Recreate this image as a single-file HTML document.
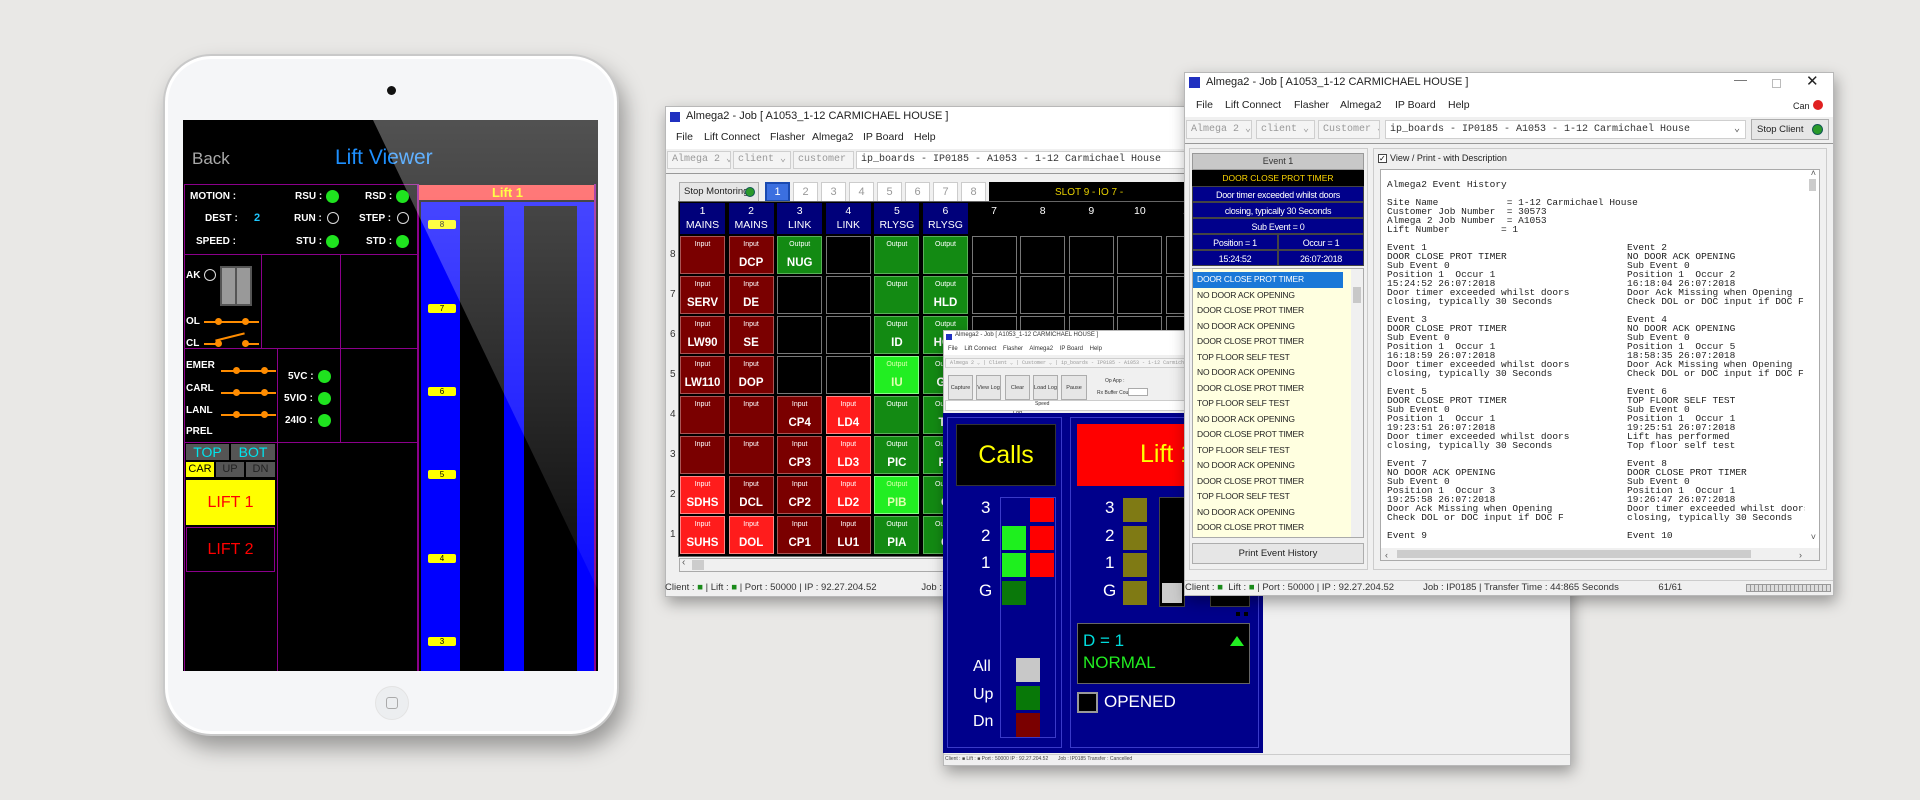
<!DOCTYPE html>
<html><head><meta charset="utf-8">
<style>
*{margin:0;padding:0;box-sizing:border-box}
body{width:1920px;height:800px;background:#e9e8e6;position:relative;overflow:hidden;font-family:"Liberation Sans",sans-serif}
.a{position:absolute}
.t{position:absolute;white-space:nowrap}
.win{position:absolute;background:#f0f0f0;border:1px solid #b8b8b8;box-shadow:2px 6px 14px rgba(0,0,0,.35)}
.cb{position:absolute;background:#f4f4f4;border:1px solid #cfcfcf;font-family:"Liberation Mono",monospace;color:#999;font-size:10px;padding-left:4px;line-height:16px;white-space:nowrap;overflow:hidden}
.grid{position:absolute;left:680px;top:203px;display:grid;grid-template-columns:repeat(11,45px);column-gap:3.6px;grid-template-rows:31px repeat(8,38px);row-gap:2px}
.grid div{color:#fff;text-align:center;font-size:7px;line-height:10px;padding-top:3px;overflow:hidden;white-space:nowrap}
.grid div b{display:block;font-size:11.5px;line-height:14px;margin-top:6px}
.h{background:#00007a;font-size:10.5px!important;line-height:14px!important;padding-top:1px!important}
.hk{background:#000;font-size:10.5px!important;line-height:14px!important;padding-top:1px!important}
.d{background:#7a0000;border:1px solid #aa5555}
.r{background:#ff1c1c;border:1px solid #ff8888}
.g{background:#138a13;border:1px solid #5ab05a}
.G{background:#22ee22;border:1px solid #88ff88;color:#dfffb0!important}
.k{background:#000;border:1px solid #777}
.sw{position:absolute;height:2px;background:#ff8c00}
.sd{position:absolute;width:7px;height:7px;border-radius:50%;background:#ff8c00}
.gd{position:absolute;width:13px;height:13px;border-radius:50%;background:#1fe31f}
.od{position:absolute;width:12px;height:12px;border-radius:50%;border:1px solid #ddd}
.tw{position:absolute;color:#fff;font-weight:bold;font-size:10px;white-space:nowrap}
.pl{position:absolute;border:1px solid #8b008b}
.fl{position:absolute;left:245px;width:28px;height:9px;background:#ffff00;border-radius:2px;font-size:8px;line-height:9px;text-align:center;color:#000}
.li{height:15.5px;line-height:15.5px;font-size:8.5px;color:#222;padding-left:4px;letter-spacing:-.2px;white-space:nowrap}
.nv{position:absolute;background:#00008b;color:#fff;font-size:9px;text-align:center;line-height:16px;border:1px solid #444;white-space:nowrap;letter-spacing:-.3px}
pre{font-family:"Liberation Mono",monospace;font-size:9.5px;line-height:9px;color:#222}
.bt{position:absolute;background:#e6e6e6;border:1px solid #adadad;font-size:5.5px;text-align:center;line-height:25px;color:#333}
</style></head><body>

<!-- TABLET -->
<div class="a" style="left:163px;top:54px;width:456px;height:682px;border-radius:48px;background:#f5f6f8;border:2px solid #c9c9c9;box-shadow:6px 12px 22px rgba(0,0,0,.35), inset 0 0 0 3px #fff"></div>
<div class="a" style="left:387px;top:86px;width:9px;height:9px;border-radius:50%;background:#111"></div>
<div class="a" style="left:375px;top:686px;width:34px;height:34px;border-radius:50%;background:#eceef0;border:1px solid #e3e3e3"></div>
<div class="a" style="left:386px;top:697px;width:12px;height:12px;border-radius:3px;border:1px solid #aaa"></div>

<div class="a" style="left:183px;top:120px;width:415px;height:551px;background:#000;overflow:hidden">
  <div class="t" style="left:9px;top:29px;font-size:17px;color:#aaa">Back</div>
  <div class="t" style="left:152px;top:26px;font-size:21px;color:#1e90ff">Lift Viewer</div>
  <div class="pl" style="left:1px;top:64px;width:234px;height:71px"></div>
  <div class="tw" style="left:7px;top:71px">MOTION :</div>
  <div class="tw" style="left:22px;top:93px">DEST :</div>
  <div class="t" style="left:71px;top:92px;color:#1ec8ff;font-size:11px;font-weight:bold">2</div>
  <div class="tw" style="left:13px;top:116px">SPEED :</div>
  <div class="tw" style="left:112px;top:71px">RSU :</div><div class="gd" style="left:143px;top:70px"></div>
  <div class="tw" style="left:111px;top:93px">RUN :</div><div class="od" style="left:144px;top:92px"></div>
  <div class="tw" style="left:113px;top:116px">STU :</div><div class="gd" style="left:143px;top:115px"></div>
  <div class="tw" style="left:182px;top:71px">RSD :</div><div class="gd" style="left:213px;top:70px"></div>
  <div class="tw" style="left:176px;top:93px">STEP :</div><div class="od" style="left:214px;top:92px"></div>
  <div class="tw" style="left:183px;top:116px">STD :</div><div class="gd" style="left:213px;top:115px"></div>
  <div class="pl" style="left:1px;top:134px;width:78px;height:95px"></div>
  <div class="pl" style="left:78px;top:134px;width:80px;height:95px"></div>
  <div class="pl" style="left:157px;top:134px;width:78px;height:95px"></div>
  <div class="tw" style="left:3px;top:150px">AK</div><div class="od" style="left:21px;top:149px"></div>
  <div class="a" style="left:37px;top:146px;width:32px;height:40px;background:#999;border:2px solid #555"></div>
  <div class="a" style="left:52px;top:148px;width:2px;height:36px;background:#555"></div>
  <div class="tw" style="left:3px;top:196px">OL</div>
  <div class="sw" style="left:21px;top:201px;width:55px"></div><div class="sd" style="left:32px;top:198px"></div><div class="sd" style="left:59px;top:198px"></div>
  <div class="tw" style="left:3px;top:218px">CL</div>
  <div class="sw" style="left:21px;top:223px;width:12px"></div><div class="sw" style="left:64px;top:223px;width:12px"></div>
  <div class="sw" style="left:32px;top:216px;width:30px;transform:rotate(-14deg)"></div><div class="sd" style="left:32px;top:220px"></div><div class="sd" style="left:59px;top:220px"></div>
  <div class="pl" style="left:1px;top:228px;width:94px;height:95px"></div>
  <div class="pl" style="left:94px;top:228px;width:64px;height:95px"></div>
  <div class="pl" style="left:157px;top:228px;width:78px;height:95px"></div>
  <div class="tw" style="left:3px;top:240px">EMER</div><div class="sw" style="left:38px;top:250px;width:55px"></div><div class="sd" style="left:50px;top:247px"></div><div class="sd" style="left:78px;top:247px"></div>
  <div class="tw" style="left:3px;top:263px">CARL</div><div class="sw" style="left:38px;top:272px;width:55px"></div><div class="sd" style="left:50px;top:269px"></div><div class="sd" style="left:78px;top:269px"></div>
  <div class="tw" style="left:3px;top:285px">LANL</div><div class="sw" style="left:38px;top:294px;width:55px"></div><div class="sd" style="left:50px;top:291px"></div><div class="sd" style="left:78px;top:291px"></div>
  <div class="tw" style="left:3px;top:306px">PREL</div>
  <div class="tw" style="left:105px;top:251px">5VC :</div><div class="gd" style="left:135px;top:250px"></div>
  <div class="tw" style="left:101px;top:273px">5VIO :</div><div class="gd" style="left:135px;top:272px"></div>
  <div class="tw" style="left:102px;top:295px">24IO :</div><div class="gd" style="left:135px;top:294px"></div>
  <div class="pl" style="left:1px;top:322px;width:94px;height:240px"></div>
  <div class="pl" style="left:94px;top:322px;width:141px;height:240px"></div>
  <div class="a" style="left:3px;top:324px;width:43px;height:16px;background:#555;color:#00e5ee;font-size:14px;line-height:16px;text-align:center">TOP</div>
  <div class="a" style="left:48px;top:324px;width:44px;height:16px;background:#555;color:#00e5ee;font-size:14px;line-height:16px;text-align:center">BOT</div>
  <div class="a" style="left:3px;top:342px;width:28px;height:15px;background:#ffff00;color:#000;font-size:11px;line-height:15px;text-align:center">CAR</div>
  <div class="a" style="left:33px;top:342px;width:28px;height:15px;background:#555;color:#222;font-size:11px;line-height:15px;text-align:center">UP</div>
  <div class="a" style="left:63px;top:342px;width:29px;height:15px;background:#555;color:#222;font-size:11px;line-height:15px;text-align:center">DN</div>
  <div class="a" style="left:3px;top:360px;width:89px;height:45px;background:#ffff00;color:#f00;font-size:16px;line-height:45px;text-align:center">LIFT 1</div>
  <div class="a" style="left:3px;top:407px;width:89px;height:45px;border:1px solid #8b008b;color:#f00;font-size:16px;line-height:43px;text-align:center">LIFT 2</div>
  <div class="a" style="left:236px;top:65px;width:177px;height:15px;background:#ff4444;color:#ffff00;font-size:13px;font-weight:bold;line-height:15px;text-align:center">Lift 1</div>
  <div class="a" style="left:234px;top:64px;width:2px;height:490px;background:#8b008b"></div>
  <div class="a" style="left:238px;top:82px;width:173px;height:480px;background:#0000ff"></div>
  <div class="a" style="left:277px;top:86px;width:44px;height:470px;background:#000"></div>
  <div class="a" style="left:341px;top:86px;width:53px;height:470px;background:#000"></div>
  <div class="a" style="left:411px;top:64px;width:2px;height:490px;background:#8b008b"></div>
  <div class="fl" style="top:100px">8</div><div class="fl" style="top:184px">7</div><div class="fl" style="top:267px">6</div><div class="fl" style="top:350px">5</div><div class="fl" style="top:434px">4</div><div class="fl" style="top:517px">3</div>
  <svg class="a" style="left:0;top:0" width="415" height="551"><defs><linearGradient id="gl" x1="0" y1="0" x2="0" y2="1"><stop offset="0" stop-color="#fff" stop-opacity=".32"/><stop offset="1" stop-color="#fff" stop-opacity=".05"/></linearGradient></defs><polygon points="190,0 415,0 415,470" fill="url(#gl)"/></svg>
</div>

<!-- WINDOW 1 -->
<div class="win" style="left:665px;top:106px;width:540px;height:491px"></div>
<div class="a" style="left:666px;top:107px;width:538px;height:42px;background:#fff"></div>
<div class="a" style="left:670px;top:112px;width:10px;height:10px;background:#2030c0"></div>
<div class="t" style="left:686px;top:110px;font-size:11px;color:#222">Almega2 - Job [ A1053_1-12 CARMICHAEL HOUSE ]</div>
<div class="t" style="left:676px;top:131px;font-size:10.5px;color:#222">File</div>
<div class="t" style="left:704px;top:131px;font-size:10.5px;color:#222">Lift Connect</div>
<div class="t" style="left:770px;top:131px;font-size:10.5px;color:#222">Flasher</div>
<div class="t" style="left:812px;top:131px;font-size:10.5px;color:#222">Almega2</div>
<div class="t" style="left:863px;top:131px;font-size:10.5px;color:#222">IP Board</div>
<div class="t" style="left:914px;top:131px;font-size:10.5px;color:#222">Help</div>
<div class="cb" style="left:667px;top:151px;width:64px;height:18px">Almega 2 ⌄</div>
<div class="cb" style="left:733px;top:151px;width:58px;height:18px">client ⌄</div>
<div class="cb" style="left:793px;top:151px;width:61px;height:18px">customer ⌄</div>
<div class="cb" style="left:856px;top:151px;width:340px;height:18px;background:#fff;color:#333">ip_boards - IP0185 - A1053 - 1-12 Carmichael House</div>
<div class="a" style="left:666px;top:173px;width:538px;height:1px;background:#999"></div>
<div class="a" style="left:679px;top:182px;width:80px;height:20px;background:#e6e6e6;border:1px solid #adadad;font-size:9.5px;line-height:18px;padding-left:4px;color:#222">Stop Montoring</div>
<div class="a" style="left:745px;top:187px;width:10px;height:10px;border-radius:50%;background:#2a9a2a;border:1px solid #155"></div>
<div class="a" style="left:765px;top:182px;width:25px;height:20px;background:#3b6fe0;border:2px solid #1a4ab0;color:#fff;font-size:11px;text-align:center;line-height:16px">1</div>
<div class="a" style="left:793px;top:182px;width:25px;height:20px;background:#fff;border:1px solid #ccc;color:#999;font-size:11px;text-align:center;line-height:18px">2</div>
<div class="a" style="left:821px;top:182px;width:25px;height:20px;background:#fff;border:1px solid #ccc;color:#999;font-size:11px;text-align:center;line-height:18px">3</div>
<div class="a" style="left:849px;top:182px;width:25px;height:20px;background:#fff;border:1px solid #ccc;color:#999;font-size:11px;text-align:center;line-height:18px">4</div>
<div class="a" style="left:877px;top:182px;width:25px;height:20px;background:#fff;border:1px solid #ccc;color:#999;font-size:11px;text-align:center;line-height:18px">5</div>
<div class="a" style="left:905px;top:182px;width:25px;height:20px;background:#fff;border:1px solid #ccc;color:#999;font-size:11px;text-align:center;line-height:18px">6</div>
<div class="a" style="left:933px;top:182px;width:25px;height:20px;background:#fff;border:1px solid #ccc;color:#999;font-size:11px;text-align:center;line-height:18px">7</div>
<div class="a" style="left:961px;top:182px;width:25px;height:20px;background:#fff;border:1px solid #ccc;color:#999;font-size:11px;text-align:center;line-height:18px">8</div>
<div class="a" style="left:989px;top:182px;width:216px;height:21px;background:#000;color:#e8d000;font-size:10px;line-height:21px;padding-left:66px">SLOT 9 - IO 7 -</div>
<div class="a" style="left:678px;top:201px;width:527px;height:356px;background:#000;border:1px solid #666"></div>
<div class="t" style="left:670px;top:249px;font-size:10px;color:#333">8</div>
<div class="t" style="left:670px;top:289px;font-size:10px;color:#333">7</div>
<div class="t" style="left:670px;top:329px;font-size:10px;color:#333">6</div>
<div class="t" style="left:670px;top:369px;font-size:10px;color:#333">5</div>
<div class="t" style="left:670px;top:409px;font-size:10px;color:#333">4</div>
<div class="t" style="left:670px;top:449px;font-size:10px;color:#333">3</div>
<div class="t" style="left:670px;top:489px;font-size:10px;color:#333">2</div>
<div class="t" style="left:670px;top:529px;font-size:10px;color:#333">1</div>
<div class="grid">
<div class="h">1<br>MAINS</div><div class="h">2<br>MAINS</div><div class="h">3<br>LINK</div><div class="h">4<br>LINK</div><div class="h">5<br>RLYSG</div><div class="h">6<br>RLYSG</div><div class="hk">7</div><div class="hk">8</div><div class="hk">9</div><div class="hk">10</div><div class="hk">11</div>
<div class="d">Input</div><div class="d">Input<b>DCP</b></div><div class="g">Output<b>NUG</b></div><div class="k"></div><div class="g">Output</div><div class="g">Output</div><div class="k"></div><div class="k"></div><div class="k"></div><div class="k"></div><div class="k"></div>
<div class="d">Input<b>SERV</b></div><div class="d">Input<b>DE</b></div><div class="k"></div><div class="k"></div><div class="g">Output</div><div class="g">Output<b>HLD</b></div><div class="k"></div><div class="k"></div><div class="k"></div><div class="k"></div><div class="k"></div>
<div class="d">Input<b>LW90</b></div><div class="d">Input<b>SE</b></div><div class="k"></div><div class="k"></div><div class="g">Output<b>ID</b></div><div class="g">Output<b>HCL</b></div><div class="k"></div><div class="k"></div><div class="k"></div><div class="k"></div><div class="k"></div>
<div class="d">Input<b>LW110</b></div><div class="d">Input<b>DOP</b></div><div class="k"></div><div class="k"></div><div class="G">Output<b>IU</b></div><div class="g">Output<b>GO</b></div><div class="k"></div><div class="k"></div><div class="k"></div><div class="k"></div><div class="k"></div>
<div class="d">Input</div><div class="d">Input</div><div class="d">Input<b>CP4</b></div><div class="r">Input<b>LD4</b></div><div class="g">Output</div><div class="g">Output<b>TL</b></div><div class="k"></div><div class="k"></div><div class="k"></div><div class="k"></div><div class="k"></div>
<div class="d">Input</div><div class="d">Input</div><div class="d">Input<b>CP3</b></div><div class="r">Input<b>LD3</b></div><div class="g">Output<b>PIC</b></div><div class="g">Output<b>FL</b></div><div class="k"></div><div class="k"></div><div class="k"></div><div class="k"></div><div class="k"></div>
<div class="r">Input<b>SDHS</b></div><div class="d">Input<b>DCL</b></div><div class="d">Input<b>CP2</b></div><div class="r">Input<b>LD2</b></div><div class="G">Output<b>PIB</b></div><div class="g">Output<b>G</b></div><div class="k"></div><div class="k"></div><div class="k"></div><div class="k"></div><div class="k"></div>
<div class="r">Input<b>SUHS</b></div><div class="r">Input<b>DOL</b></div><div class="d">Input<b>CP1</b></div><div class="d">Input<b>LU1</b></div><div class="g">Output<b>PIA</b></div><div class="g">Output<b>G</b></div><div class="k"></div><div class="k"></div><div class="k"></div><div class="k"></div><div class="k"></div>
</div>
<div class="a" style="left:679px;top:558px;width:520px;height:14px;background:#f0f0f0;border:1px solid #aaa"></div>
<div class="a" style="left:692px;top:560px;width:12px;height:10px;background:#ccc"></div>
<div class="t" style="left:682px;top:557px;font-size:10px;color:#555">‹</div>
<div class="t" style="left:665px;top:582px;font-size:9.5px;color:#333">Client : <span style="color:#1a8a1a">■</span> | Lift : <span style="color:#1a8a1a">■</span> | Port : 50000 | IP : 92.27.204.52 &nbsp; &nbsp; &nbsp; &nbsp; &nbsp; &nbsp; &nbsp; &nbsp; Job : IP0185</div>

<!-- WINDOW 2 -->
<div class="win" style="left:943px;top:330px;width:628px;height:436px"></div>
<div class="a" style="left:944px;top:331px;width:626px;height:24px;background:#fff"></div>
<div class="a" style="left:946px;top:334px;width:6px;height:6px;background:#2030c0"></div>
<div class="t" style="left:955px;top:332px;font-size:6px;color:#333">Almega2 - Job [ A1053_1-12 CARMICHAEL HOUSE ]</div>
<div class="t" style="left:948px;top:346px;font-size:6px;color:#333">File &nbsp;&nbsp; Lift Connect &nbsp;&nbsp; Flasher &nbsp;&nbsp; Almega2 &nbsp;&nbsp; IP Board &nbsp;&nbsp; Help</div>
<div class="cb" style="left:945px;top:358px;width:240px;height:10px;font-size:5px;line-height:8px">Almega 2 ⌄ | Client ⌄ | Customer ⌄ | ip_boards - IP0185 - A1053 - 1-12 Carmichael</div>
<div class="bt" style="left:948px;top:375px;width:25px;height:25px">Capture</div>
<div class="bt" style="left:976px;top:375px;width:25px;height:25px">View Log</div>
<div class="bt" style="left:1005px;top:375px;width:25px;height:25px">Clear Log</div>
<div class="bt" style="left:1033px;top:375px;width:25px;height:25px">Load Log</div>
<div class="bt" style="left:1061px;top:375px;width:26px;height:25px">Pause</div>
<div class="t" style="left:1105px;top:378px;font-size:5px;color:#333">Op App :</div>
<div class="t" style="left:1097px;top:390px;font-size:5px;color:#333">Rx Buffer Count :</div>
<div class="a" style="left:1128px;top:388px;width:20px;height:8px;background:#fff;border:1px solid #aaa"></div>
<div class="a" style="left:945px;top:400px;width:620px;height:11px;background:#fff;border:1px solid #ccc"></div>
<div class="t" style="left:1035px;top:401px;font-size:5px;color:#333">Speed</div>
<div class="a" style="left:943px;top:413px;width:320px;height:340px;background:#00008b"></div>
<div class="a" style="left:947px;top:417px;width:115px;height:331px;border:1px solid #3a3ac8"></div>
<div class="a" style="left:1070px;top:417px;width:189px;height:331px;border:1px solid #3a3ac8"></div>
<div class="a" style="left:956px;top:424px;width:100px;height:62px;background:#000;border:1px solid #333;color:#ffff00;font-size:25px;line-height:60px;text-align:center">Calls</div>
<div class="a" style="left:1000px;top:497px;width:56px;height:241px;border:1px solid #3a3ac8"></div>
<div class="t" style="left:981px;top:498px;font-size:17px;color:#fff">3</div>
<div class="t" style="left:981px;top:526px;font-size:17px;color:#fff">2</div>
<div class="t" style="left:981px;top:553px;font-size:17px;color:#fff">1</div>
<div class="t" style="left:979px;top:581px;font-size:17px;color:#fff">G</div>
<div class="a" style="left:1030px;top:498px;width:24px;height:24px;background:#f00"></div>
<div class="a" style="left:1002px;top:526px;width:24px;height:24px;background:#1ef01e"></div>
<div class="a" style="left:1030px;top:526px;width:24px;height:24px;background:#f00"></div>
<div class="a" style="left:1002px;top:553px;width:24px;height:24px;background:#1ef01e"></div>
<div class="a" style="left:1030px;top:553px;width:24px;height:24px;background:#f00"></div>
<div class="a" style="left:1002px;top:581px;width:24px;height:24px;background:#0a780a"></div>
<div class="t" style="left:973px;top:658px;font-size:16px;color:#fff">All</div>
<div class="t" style="left:973px;top:686px;font-size:16px;color:#fff">Up</div>
<div class="t" style="left:973px;top:713px;font-size:16px;color:#fff">Dn</div>
<div class="a" style="left:1016px;top:658px;width:24px;height:24px;background:#c8c8c8"></div>
<div class="a" style="left:1016px;top:686px;width:24px;height:24px;background:#087808"></div>
<div class="a" style="left:1016px;top:713px;width:24px;height:24px;background:#7a0000"></div>
<div class="a" style="left:1077px;top:424px;width:180px;height:62px;background:#f00;color:#ffff00;font-size:25px;line-height:60px;padding-left:63px">Lift 1</div>
<div class="t" style="left:1105px;top:498px;font-size:17px;color:#fff">3</div>
<div class="t" style="left:1105px;top:526px;font-size:17px;color:#fff">2</div>
<div class="t" style="left:1105px;top:553px;font-size:17px;color:#fff">1</div>
<div class="t" style="left:1103px;top:581px;font-size:17px;color:#fff">G</div>
<div class="a" style="left:1123px;top:498px;width:24px;height:24px;background:#7f7a14"></div>
<div class="a" style="left:1123px;top:526px;width:24px;height:24px;background:#7f7a14"></div>
<div class="a" style="left:1123px;top:553px;width:24px;height:24px;background:#7f7a14"></div>
<div class="a" style="left:1123px;top:581px;width:24px;height:24px;background:#7f7a14"></div>
<div class="a" style="left:1159px;top:497px;width:26px;height:110px;background:#000;border:1px solid #444"></div>
<div class="a" style="left:1162px;top:583px;width:20px;height:20px;background:#ccc"></div>
<div class="a" style="left:1210px;top:589px;width:40px;height:18px;background:#000;border:1px solid #444"></div>
<div class="a" style="left:1236px;top:612px;width:4px;height:4px;background:#000"></div><div class="a" style="left:1244px;top:612px;width:4px;height:4px;background:#000"></div>
<div class="a" style="left:1077px;top:623px;width:173px;height:61px;background:#000;border:1px solid #666"></div>
<div class="t" style="left:1083px;top:631px;font-size:17px;color:#00dddd">D = 1</div>
<div class="t" style="left:1083px;top:653px;font-size:17px;color:#22ee22">NORMAL</div>
<div class="a" style="left:1230px;top:636px;width:0;height:0;border-left:7px solid transparent;border-right:7px solid transparent;border-bottom:10px solid #22ee22"></div>
<div class="a" style="left:1077px;top:692px;width:21px;height:21px;background:#000;border:2px solid #999"></div>
<div class="t" style="left:1104px;top:692px;font-size:17px;color:#fff">OPENED</div>
<div class="a" style="left:944px;top:754px;width:626px;height:1px;background:#ccc"></div>
<div class="t" style="left:945px;top:756px;font-size:5px;color:#444">Client : ■ Lift : ■ Port : 50000 IP : 92.27.204.52 &nbsp; &nbsp; &nbsp; Job : IP0185 Transfer : Cancelled</div>

<!-- WINDOW 3 -->
<div class="win" style="left:1184px;top:72px;width:650px;height:524px"></div>
<div class="a" style="left:1185px;top:73px;width:648px;height:44px;background:#fff"></div>
<div class="a" style="left:1189px;top:77px;width:11px;height:11px;background:#2030c0"></div>
<div class="t" style="left:1206px;top:76px;font-size:11px;color:#222">Almega2 - Job [ A1053_1-12 CARMICHAEL HOUSE ]</div>
<div class="t" style="left:1734px;top:72px;font-size:13px;color:#666">—</div>
<div class="a" style="left:1772px;top:79px;width:9px;height:9px;border:1px solid #bbb"></div>
<div class="t" style="left:1806px;top:72px;font-size:15px;color:#222">✕</div>
<div class="t" style="left:1196px;top:99px;font-size:10.5px;color:#222">File</div>
<div class="t" style="left:1225px;top:99px;font-size:10.5px;color:#222">Lift Connect</div>
<div class="t" style="left:1294px;top:99px;font-size:10.5px;color:#222">Flasher</div>
<div class="t" style="left:1340px;top:99px;font-size:10.5px;color:#222">Almega2</div>
<div class="t" style="left:1395px;top:99px;font-size:10.5px;color:#222">IP Board</div>
<div class="t" style="left:1448px;top:99px;font-size:10.5px;color:#222">Help</div>
<div class="t" style="left:1793px;top:101px;font-size:9px;color:#222">Can</div>
<div class="a" style="left:1813px;top:100px;width:10px;height:10px;border-radius:50%;background:#e02020"></div>
<div class="cb" style="left:1186px;top:120px;width:66px;height:19px;line-height:17px">Almega 2 ⌄</div>
<div class="cb" style="left:1256px;top:120px;width:59px;height:19px;line-height:17px">client ⌄</div>
<div class="cb" style="left:1318px;top:120px;width:62px;height:19px;line-height:17px">Customer ⌄</div>
<div class="cb" style="left:1385px;top:120px;width:361px;height:19px;line-height:17px;background:#fff;color:#333">ip_boards - IP0185 - A1053 - 1-12 Carmichael House<span style="position:absolute;right:5px;color:#555">⌄</span></div>
<div class="a" style="left:1751px;top:119px;width:78px;height:21px;background:#e6e6e6;border:1px solid #adadad;font-size:9.5px;line-height:19px;padding-left:5px;color:#222">Stop Client</div>
<div class="a" style="left:1812px;top:124px;width:11px;height:11px;border-radius:50%;background:#2a9a2a;border:1px solid #155"></div>
<div class="a" style="left:1185px;top:143px;width:648px;height:1px;background:#999"></div>
<div class="a" style="left:1189px;top:148px;width:179px;height:422px;border:1px solid #ccc"></div>
<div class="a" style="left:1192px;top:153px;width:172px;height:17px;background:#c8c8c8;border:1px solid #999;font-size:9px;line-height:15px;text-align:center;color:#333">Event 1</div>
<div class="a" style="left:1192px;top:170px;width:172px;height:16px;background:#000;color:#ffd800;font-size:8.5px;line-height:16px;text-align:center">DOOR CLOSE PROT TIMER</div>
<div class="nv" style="left:1192px;top:186px;width:172px;height:16px">Door timer exceeded whilst doors</div>
<div class="nv" style="left:1192px;top:202px;width:172px;height:16px">closing, typically 30 Seconds</div>
<div class="nv" style="left:1192px;top:218px;width:172px;height:16px">Sub Event = 0</div>
<div class="nv" style="left:1192px;top:234px;width:86px;height:16px">Position = 1</div>
<div class="nv" style="left:1278px;top:234px;width:86px;height:16px">Occur = 1</div>
<div class="nv" style="left:1192px;top:250px;width:86px;height:16px">15:24:52</div>
<div class="nv" style="left:1278px;top:250px;width:86px;height:16px">26:07:2018</div>
<div class="a" style="left:1192px;top:268px;width:172px;height:270px;background:#ffffe0;border:1px solid #aaa;overflow:hidden;padding-top:3px">
  <div class="li" style="background:#1a78d8;color:#fff;width:150px">DOOR CLOSE PROT TIMER</div>
  <div class="li">NO DOOR ACK OPENING</div><div class="li">DOOR CLOSE PROT TIMER</div><div class="li">NO DOOR ACK OPENING</div><div class="li">DOOR CLOSE PROT TIMER</div><div class="li">TOP FLOOR SELF TEST</div><div class="li">NO DOOR ACK OPENING</div><div class="li">DOOR CLOSE PROT TIMER</div><div class="li">TOP FLOOR SELF TEST</div><div class="li">NO DOOR ACK OPENING</div><div class="li">DOOR CLOSE PROT TIMER</div><div class="li">TOP FLOOR SELF TEST</div><div class="li">NO DOOR ACK OPENING</div><div class="li">DOOR CLOSE PROT TIMER</div><div class="li">TOP FLOOR SELF TEST</div><div class="li">NO DOOR ACK OPENING</div><div class="li">DOOR CLOSE PROT TIMER</div>
  <div class="a" style="right:0;top:0;width:12px;height:268px;background:#f0f0f0"></div>
  <div class="a" style="right:2px;top:18px;width:8px;height:16px;background:#c8c8c8"></div>
</div>
<div class="a" style="left:1192px;top:543px;width:172px;height:21px;background:#e6e6e6;border:1px solid #adadad;font-size:9.5px;line-height:19px;text-align:center;color:#222">Print Event History</div>
<div class="a" style="left:1373px;top:148px;width:454px;height:422px;border:1px solid #ccc"></div>
<div class="a" style="left:1378px;top:154px;width:9px;height:9px;border:1px solid #444;background:#fff;font-size:8px;line-height:7px">✓</div>
<div class="t" style="left:1390px;top:153px;font-size:9px;color:#222">View / Print - with Description</div>
<div class="a" style="left:1380px;top:169px;width:440px;height:392px;background:#fff;border:1px solid #aaa;overflow:hidden">
<pre class="a" style="left:6px;top:10px">Almega2 Event History

Site Name            = 1-12 Carmichael House
Customer Job Number  = 30573
Almega 2 Job Number  = A1053
Lift Number         = 1

Event 1
DOOR CLOSE PROT TIMER
Sub Event 0
Position 1  Occur 1
15:24:52 26:07:2018
Door timer exceeded whilst doors
closing, typically 30 Seconds

Event 3
DOOR CLOSE PROT TIMER
Sub Event 0
Position 1  Occur 1
16:18:59 26:07:2018
Door timer exceeded whilst doors
closing, typically 30 Seconds

Event 5
DOOR CLOSE PROT TIMER
Sub Event 0
Position 1  Occur 1
19:23:51 26:07:2018
Door timer exceeded whilst doors
closing, typically 30 Seconds

Event 7
NO DOOR ACK OPENING
Sub Event 0
Position 1  Occur 3
19:25:58 26:07:2018
Door Ack Missing when Opening
Check DOL or DOC input if DOC F

Event 9</pre>
<pre class="a" style="left:246px;top:73px">Event 2
NO DOOR ACK OPENING
Sub Event 0
Position 1  Occur 2
16:18:04 26:07:2018
Door Ack Missing when Opening
Check DOL or DOC input if DOC F

Event 4
NO DOOR ACK OPENING
Sub Event 0
Position 1  Occur 5
18:58:35 26:07:2018
Door Ack Missing when Opening
Check DOL or DOC input if DOC F

Event 6
TOP FLOOR SELF TEST
Sub Event 0
Position 1  Occur 1
19:25:51 26:07:2018
Lift has performed
Top floor self test

Event 8
DOOR CLOSE PROT TIMER
Sub Event 0
Position 1  Occur 1
19:26:47 26:07:2018
Door timer exceeded whilst doors
closing, typically 30 Seconds

Event 10</pre>
  <div class="a" style="right:0;top:0;width:14px;height:378px;background:#fff"></div>
  <div class="t" style="right:3px;top:-2px;font-size:9px;color:#555">˄</div>
  <div class="a" style="right:3px;top:9px;width:7px;height:12px;background:#ccc"></div>
  <div class="t" style="right:3px;top:362px;font-size:9px;color:#555">˅</div>
  <div class="a" style="left:0;bottom:0;width:440px;height:12px;background:#f0f0f0"></div>
  <div class="a" style="left:16px;bottom:2px;width:354px;height:8px;background:#ccc"></div>
  <div class="t" style="left:4px;bottom:0;font-size:9px;color:#555">‹</div>
  <div class="t" style="left:418px;bottom:0;font-size:9px;color:#555">›</div>
</div>
<div class="a" style="left:1185px;top:580px;width:648px;height:1px;background:#ccc"></div>
<div class="t" style="left:1185px;top:582px;font-size:9.5px;color:#333">Client : <span style="color:#1a8a1a">■</span> &nbsp;Lift : <span style="color:#1a8a1a">■</span> | Port : 50000 | IP : 92.27.204.52 &nbsp; &nbsp; &nbsp; &nbsp; &nbsp; Job : IP0185 | Transfer Time : 44:865 Seconds &nbsp; &nbsp; &nbsp; &nbsp; &nbsp; &nbsp; &nbsp; 61/61</div>
<div class="a" style="left:1746px;top:584px;width:85px;height:8px;border:1px solid #999;background:repeating-linear-gradient(90deg,#ddd 0 3px,#999 3px 4px)"></div>
</body></html>
